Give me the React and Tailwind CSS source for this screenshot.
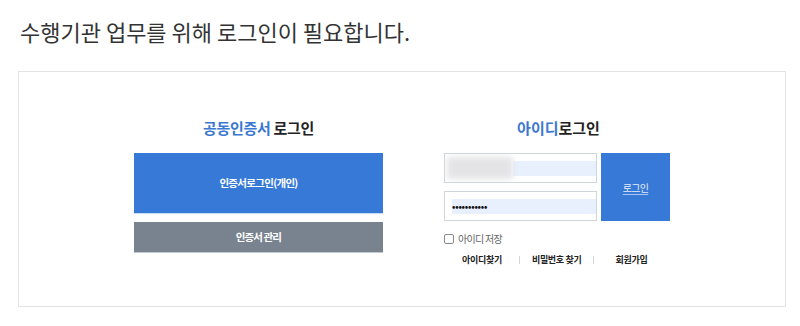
import React from "react";

const font = { fontFamily: '"Noto Sans CJK KR", "Noto Sans", sans-serif' };

export default function App() {
  return (
    <div className="w-[800px] h-[326px] bg-white text-[#333]" style={font}>
      {/* page title */}
      <div className="pl-[20px] pt-[16px] h-[71px]">
        <h1 className="text-[22px] leading-[30px] font-normal text-[#333]">
          수행기관 업무를 위해 로그인이 필요합니다.
        </h1>
      </div>

      {/* login box */}
      <div className="ml-[18px] w-[768px] h-[236px] border border-[#e3e3e3] flex pl-[115px] pt-[46px] gap-[61px]">
        {/* certificate login */}
        <div className="w-[249px] flex flex-col">
          <h2 className="text-[15px] leading-[20px] font-bold text-center tracking-[-0.3px] mb-[15px]">
            <span className="text-[#3b78d1]">공동인증서</span>
            <span className="text-[#222]"> 로그인</span>
          </h2>
          <button className="h-[61px] bg-[#3779d6] border-b border-[#c9daf3] text-white text-[10.5px] font-bold tracking-[-0.7px]">
            인증서로그인(개인)
          </button>
          <button className="mt-[8px] h-[31px] bg-[#78838f] border-b border-[#c2c8cf] text-white text-[10.5px] font-bold tracking-[-0.9px]">
            인증서 관리
          </button>
        </div>

        {/* id login */}
        <div className="w-[226px] flex flex-col">
          <h2 className="text-[15px] leading-[20px] font-bold text-center mb-[15px] pl-[3px]">
            <span className="text-[#3b78d1]">아이디</span>
            <span className="text-[#222]">로그인</span>
          </h2>
          <div className="flex gap-[4px]">
            <div className="w-[153px] flex flex-col gap-[8px]">
              <div className="h-[30px] border border-[#cfd5dc] bg-white flex items-center pl-[2px] overflow-hidden">
                <div className="w-[66px] h-[22px] bg-[#e4e4e6] blur-[3px]" />
                <div className="flex-1 h-[15px] bg-[#e8f0fe]" />
              </div>
              <div className="h-[30px] border border-[#cfd5dc] bg-white flex items-center pl-[7px] overflow-hidden">
                <div className="flex-1 h-[15px] bg-[#e8f0fe] flex items-center text-[9px] leading-none tracking-[-0.2px] text-[#111] font-bold">
                  •••••••••••
                </div>
              </div>
            </div>
            <button className="w-[69px] h-[68px] bg-[#3779d6] text-[#e6edf8] text-[10px] tracking-[-0.7px] underline decoration-[#aac5ee] underline-offset-2">
              로그인
            </button>
          </div>

          <label className="mt-[12px] flex items-center gap-[4px] h-[12px]">
            <span className="w-[10px] h-[10px] border border-[#8a8a8a] rounded-[2px] bg-white" />
            <span className="text-[10px] leading-[12px] tracking-[-0.7px] text-[#666]">아이디 저장</span>
          </label>

          <div className="mt-[8px] flex items-center text-[9px] leading-[14px] font-bold tracking-[-0.3px] text-[#222]">
            <span className="ml-[18px]">아이디찾기</span>
            <span className="ml-[17px] w-px h-[8px] bg-[#d6d6d6]" />
            <span className="ml-[12px]">비밀번호 찾기</span>
            <span className="ml-[11px] w-px h-[8px] bg-[#d6d6d6]" />
            <span className="ml-[22px]">회원가입</span>
          </div>
        </div>
      </div>
    </div>
  );
}
